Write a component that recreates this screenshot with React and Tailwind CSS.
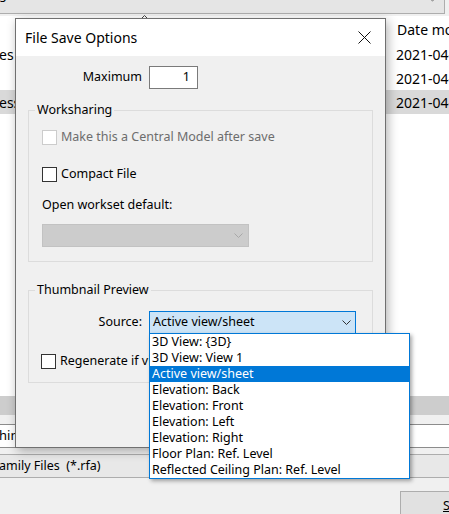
import React from "react";

// ---------------- small drawings ----------------
const Chevron = ({ color = "#333333", width = 9, height = 5 }) => (
  <svg width={width} height={height} viewBox="0 0 9 5" fill="none">
    <polyline points="0.5,0.5 4.5,4.5 8.5,0.5" stroke={color} strokeWidth="1" />
  </svg>
);

const CloseX = () => (
  <svg width="13" height="13" viewBox="0 0 13 13" fill="none">
    <line x1="0.5" y1="0.5" x2="12.5" y2="12.5" stroke="#111111" strokeWidth="1" />
    <line x1="12.5" y1="0.5" x2="0.5" y2="12.5" stroke="#111111" strokeWidth="1" />
  </svg>
);

const CheckBox = ({ disabled = false }) => (
  <div
    className={
      disabled
        ? "w-[15px] h-[15px] shrink-0 bg-white border border-[#cccccc]"
        : "w-[15px] h-[15px] shrink-0 bg-white border border-[#333333]"
    }
  />
);

// ---------------- background file dialog ----------------
const LIST_ROWS = [
  { name: "es", date: "2021-04-12 10:31", selected: false },
  { name: "", date: "2021-04-12 10:31", selected: false },
  { name: "ess", date: "2021-04-12 10:32", selected: true },
];

function FileDialogBackground() {
  return (
    <div className="flex flex-col h-full">
      {/* look-in combo, cut at the top */}
      <div className="h-[14px] w-[445px] shrink-0 flex items-start justify-between overflow-hidden bg-[#e5e5e5] border-r border-b border-[#adadad]">
        <span className="-mt-[14px] -ml-[1px] leading-[18px]">g</span>
        <div className="mr-[8px] -mt-[3px]">
          <Chevron color="#555555" width={7} height={5} />
        </div>
      </div>

      {/* file list */}
      <div className="mt-[2px] h-[380px] shrink-0 bg-white flex flex-col text-[14px]">
        <div className="h-[26px] flex">
          <div className="w-[397px] shrink-0">
            <svg className="ml-[141px] -mt-[1px]" width="7" height="4" viewBox="0 0 7 4" fill="none">
              <polyline points="0.5,3.5 3.5,0.5 6.5,3.5" stroke="#444444" strokeWidth="1" />
            </svg>
          </div>
          <span className="self-center whitespace-nowrap">Date modified</span>
        </div>
        {LIST_ROWS.map((row, i) => (
          <div
            key={i}
            className={row.selected ? "h-[24px] flex items-center bg-[#d9d9d9]" : "h-[24px] flex items-center"}
          >
            <span className="w-[397px] shrink-0 -ml-[1px] whitespace-nowrap overflow-hidden">{row.name}</span>
            <span className="whitespace-nowrap">{row.date}</span>
          </div>
        ))}
      </div>

      {/* horizontal scroll strip */}
      <div className="h-[19px] shrink-0 bg-[#cdcdcd]" />

      {/* file name */}
      <div className="mt-[9px] h-[24px] shrink-0 bg-white border-y border-[#8c8c8c] flex items-center text-[13px]">
        <span className="-ml-[1px] whitespace-nowrap">hin</span>
      </div>

      {/* file type */}
      <div className="mt-[6px] h-[24px] shrink-0 bg-[#e8e8e8] border-y border-[#adadad] flex items-center">
        <span className="-ml-[1px] whitespace-pre">amily Files  (*.rfa)</span>
      </div>

      {/* save button */}
      <div className="mt-[13px] ml-[400px] h-[30px] w-[90px] shrink-0 bg-[#e1e1e1] border border-[#adadad] flex items-center pl-[42px]">
        <span>
          <span className="underline">S</span>ave
        </span>
      </div>
    </div>
  );
}

// ---------------- File Save Options dialog ----------------
function FileSaveOptions() {
  return (
    <div className="absolute left-[15px] top-[18px] w-[371px] h-[430px] flex flex-col bg-[#f0f0f0] border border-[#707070] shadow-[2px_3px_10px_rgba(0,0,0,0.3)]">
      {/* title bar */}
      <div className="h-[37px] shrink-0 bg-white flex items-center justify-between pl-[9px] pr-[14px]">
        <span className="text-[14px]">File Save Options</span>
        <CloseX />
      </div>

      <div className="flex flex-col px-[12px]">
        {/* backups */}
        <div className="mt-[10px] flex items-center">
          <span className="w-[114px] text-right">Maximum</span>
          <div className="ml-[7px] w-[49px] h-[23px] bg-white border border-[#7a7a7a] flex items-center justify-end pr-[7px]">
            1
          </div>
        </div>

        {/* worksharing */}
        <fieldset className="mt-[12px] border border-[#dcdcdc]">
          <legend className="ml-[6px] px-[2px] leading-[18px]">Worksharing</legend>
          <div className="px-[13px] pb-[14px] flex flex-col">
            <div className="mt-[9px] h-[18px] flex items-center gap-[4px]">
              <CheckBox disabled />
              <span className="text-[#6d6d6d] whitespace-nowrap">Make this a Central Model after save</span>
            </div>
            <div className="mt-[19px] h-[18px] flex items-center gap-[4px]">
              <CheckBox />
              <span>Compact File</span>
            </div>
            <div className="mt-[13px] leading-[18px]">Open workset default:</div>
            <div className="mt-[10px] w-[207px] h-[23px] bg-[#cccccc] border border-[#c2c2c2] flex items-center justify-end pr-[5px]">
              <Chevron color="#a8a8a8" />
            </div>
          </div>
        </fieldset>

        {/* thumbnail */}
        <fieldset className="mt-[19px] border border-[#dcdcdc]">
          <legend className="ml-[6px] px-[2px] leading-[18px]">Thumbnail Preview</legend>
          <div className="px-[13px] pb-[12px] flex flex-col">
            <div className="mt-[12px] flex items-center">
              <span className="w-[100px] text-right">Source:</span>
              <div className="ml-[7px] w-[207px] h-[23px] bg-[#cce4f7] border border-[#0078d7] flex items-center justify-between pl-[3px] pr-[4px]">
                <span>Active view/sheet</span>
                <Chevron color="#333333" />
              </div>
            </div>
            <div className="mt-[18px] -ml-[1px] h-[18px] flex items-center gap-[4px]">
              <CheckBox />
              <span className="whitespace-nowrap">Regenerate if view/sheet is not up-to-date</span>
            </div>
          </div>
        </fieldset>
      </div>
    </div>
  );
}

// ---------------- open combo list ----------------
const SOURCE_OPTIONS = [
  "3D View: {3D}",
  "3D View: View 1",
  "Active view/sheet",
  "Elevation: Back",
  "Elevation: Front",
  "Elevation: Left",
  "Elevation: Right",
  "Floor Plan: Ref. Level",
  "Reflected Ceiling Plan: Ref. Level",
];

function SourceDropdown() {
  return (
    <div className="absolute left-[149px] top-[333px] w-[261px] bg-white border border-[#0078d7] shadow-[2px_2px_4px_rgba(0,0,0,0.35)] flex flex-col">
      {SOURCE_OPTIONS.map((opt) => (
        <div
          key={opt}
          className={
            opt === "Active view/sheet"
              ? "h-[16px] leading-[16px] pl-[2px] whitespace-nowrap bg-[#0078d7] text-white"
              : "h-[16px] leading-[16px] pl-[2px] whitespace-nowrap"
          }
        >
          {opt}
        </div>
      ))}
    </div>
  );
}

export default function App() {
  return (
    <div className="relative w-[449px] h-[514px] overflow-hidden bg-[#f0f0f0] text-[12.5px] text-black font-['Noto_Sans',sans-serif]">
      <FileDialogBackground />
      <FileSaveOptions />
      <SourceDropdown />
    </div>
  );
}
